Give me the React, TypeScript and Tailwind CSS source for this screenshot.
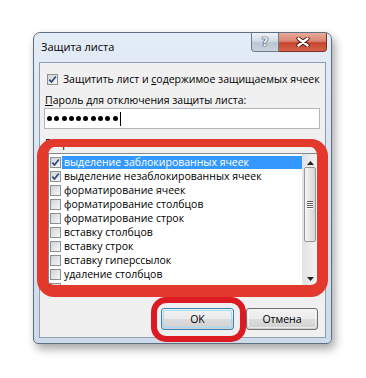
import React from "react";

const items = [
  "выделение заблокированных ячеек",
  "выделение незаблокированных ячеек",
  "форматирование ячеек",
  "форматирование столбцов",
  "форматирование строк",
  "вставку столбцов",
  "вставку строк",
  "вставку гиперссылок",
  "удаление столбцов",
  "удаление строк",
];

function Check({ checked }: { checked: boolean }) {
  return (
    <div className="w-[11px] h-[11px] border border-[#8e8f8f] bg-[linear-gradient(135deg,#cfd2d6,#f7f7f7)] flex items-center justify-center shrink-0">
      {checked && (
        <svg width="9" height="9" viewBox="0 0 9 9">
          <path d="M1.3 4.6 L3.5 7 L7.8 1.5" fill="none" stroke="#30477a" strokeWidth="1.7" />
        </svg>
      )}
    </div>
  );
}

export default function App() {
  return (
    <div className="relative w-[366px] h-[378px] bg-white overflow-hidden pt-[32px] pl-[33px] font-['Open_Sans',sans-serif] text-[10.5px] text-black">
      <div className="w-[299px] h-[312px] flex flex-col rounded-t-[7px] rounded-b-[5px] border border-[#5f6f82] bg-[linear-gradient(#e3ecf6,#cddae9)] px-[5px] pb-[5px] shadow-[3px_5px_10px_rgba(0,0,0,0.35)]">
        <div className="h-[29px] flex justify-between items-start">
          <div className="pt-[7px] pl-[2px] leading-[14px] text-[11px]">Защита листа</div>
          <div className="flex -mr-[1px]">
            <div className="w-[28px] h-[19px] rounded-bl-[4px] border border-t-0 border-[#6d7b8d] bg-[linear-gradient(#eef2f7,#d3dbe5_45%,#b9c5d3_55%,#c9d3de)] flex items-center justify-center">
              <span className="font-['DejaVu_Sans',sans-serif] font-bold text-[12px] leading-[12px] text-[#eef2f6] [text-shadow:0_0_1px_#2b3a4a,0_0_1px_#2b3a4a,0_0_1px_#2b3a4a]">?</span>
            </div>
            <div className="w-[48px] h-[19px] rounded-br-[4px] border border-t-0 border-l-0 border-[#7e2f24] bg-[linear-gradient(#eaa99a,#d98672_45%,#c6442d_55%,#d5634c)] flex items-center justify-center">
              <svg width="14" height="10" viewBox="0 0 14 10">
                <path d="M2.5 1.5 L11.5 8.5 M11.5 1.5 L2.5 8.5" stroke="#4a160e" strokeWidth="4.2" strokeLinecap="round" />
                <path d="M2.5 1.5 L11.5 8.5 M11.5 1.5 L2.5 8.5" stroke="#ffffff" strokeWidth="2.4" strokeLinecap="round" />
              </svg>
            </div>
          </div>
        </div>
        <div className="flex-1 flex flex-col border border-[#8c9db2] bg-[#f0f0f0]">
          <div className="mt-[9px] h-[14px] flex items-center pl-[7px] gap-[5px] leading-[14px] whitespace-nowrap">
            <Check checked />
            <span>
              Защитить лист и <u>с</u>одержимое защищаемых ячеек
            </span>
          </div>
          <div className="mt-[7px] h-[14px] pl-[5px] leading-[14px] whitespace-nowrap">
            <u>П</u>ароль для отключения защиты листа:
          </div>
          <div className="mt-[1px] ml-[4px] w-[276px] h-[21px] border border-[#b3b6bb] bg-white flex items-center pl-[2px]">
            <div className="flex gap-[2.3px]">
              {Array.from({ length: 10 }).map((_, i) => (
                <div key={i} className="w-[5px] h-[5px] rounded-full bg-black" />
              ))}
            </div>
            <div className="ml-[2px] w-[1px] h-[14px] bg-black" />
          </div>
          <div className="mt-[7px] h-[14px] pl-[5px] leading-[14px] whitespace-nowrap">
            Разрешить всем пользователям этого листа:
          </div>
          <div className="mt-[3px] ml-[8px] w-[270px] h-[134px] border border-[#828790] bg-white flex overflow-hidden">
            <div className="flex-1 pt-[1px] overflow-hidden">
              {items.map((t, i) => (
                <div key={i} className="h-[14px] flex items-center">
                  <div className="ml-[1px]">
                    <Check checked={i < 2} />
                  </div>
                  <div
                    className={
                      i === 0
                        ? "ml-[1px] flex-1 h-[13px] flex items-center pl-[2px] leading-[13px] whitespace-nowrap bg-[#3399ff] text-white"
                        : "ml-[1px] flex-1 h-[13px] flex items-center pl-[2px] leading-[13px] whitespace-nowrap"
                    }
                  >
                    {t}
                  </div>
                </div>
              ))}
            </div>
            <div className="w-[15px] h-full flex flex-col bg-[linear-gradient(to_right,#e3e3e3,#f2f2f2)] border-l border-[#e4e4e4]">
              <div className="h-[13px] flex items-end justify-center pb-[2px]">
                <svg width="7" height="4" viewBox="0 0 7 4">
                  <polygon points="3.5,0 7,4 0,4" fill="#222" />
                </svg>
              </div>
              <div className="mx-[1px] h-[75px] rounded-[2px] border border-[#979797] bg-[linear-gradient(to_right,#f6f6f6,#e4e4e4_50%,#d4d4d4)] flex flex-col items-center justify-center gap-[1px]">
                {[0, 1, 2, 3].map((k) => (
                  <div key={k} className="w-[6px] h-[1px] bg-[#5a5a5a] shadow-[0_1px_0_#ffffff]" />
                ))}
              </div>
              <div className="flex-1" />
              <div className="h-[13px] flex items-start justify-center pt-[4px]">
                <svg width="7" height="4" viewBox="0 0 7 4">
                  <polygon points="0,0 7,0 3.5,4" fill="#222" />
                </svg>
              </div>
            </div>
          </div>
          <div className="mt-[21px] flex justify-end gap-[12px] pr-[7px]">
            <div className="w-[73px] h-[22px] rounded-[3px] border border-[#3c7fb1] p-[1px] bg-[linear-gradient(#f2f2f2,#ebebeb_49%,#dddddd_50%,#cfcfcf)]">
              <div className="w-full h-full rounded-[2px] border border-[#9fdcf7] flex items-center justify-center leading-[14px]">
                OK
              </div>
            </div>
            <div className="w-[72px] h-[22px] rounded-[3px] border border-[#707070] p-[1px] bg-[linear-gradient(#f2f2f2,#ebebeb_49%,#dddddd_50%,#cfcfcf)]">
              <div className="w-full h-full rounded-[2px] border border-[#fafafa]/60 flex items-center justify-center leading-[14px]">
                Отмена
              </div>
            </div>
          </div>
        </div>
      </div>
      <div className="absolute left-[37px] top-[139px] w-[291px] h-[158px] rounded-[17px] border-solid border-[#e2392c] border-t-[8px] border-x-[11px] border-b-[12px]" />
      <div className="absolute left-[151px] top-[297px] w-[95px] h-[45px] rounded-[15px] border-[6px] border-solid border-[#dc1a22]" />
    </div>
  );
}
